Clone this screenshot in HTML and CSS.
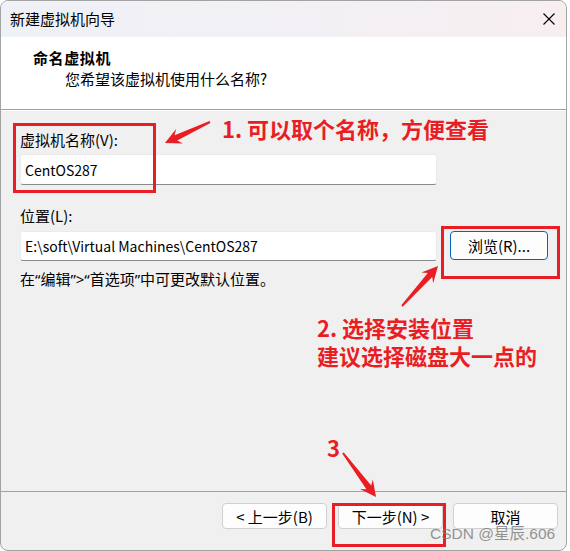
FILE: index.html
```html
<!DOCTYPE html>
<html lang="zh-CN">
<head>
<meta charset="utf-8">
<title>新建虚拟机向导</title>
<link rel="stylesheet" href="styles.css">
</head>
<body>
<div class="window">
  <div class="titlebar">
    <span class="title">新建虚拟机向导</span>
    <svg class="close" width="12" height="12" viewBox="0 0 12 12"><path d="M0.5 0.5 L11.5 11.5 M11.5 0.5 L0.5 11.5" stroke="#000" stroke-width="1.1" fill="none"/></svg>
  </div>
  <div class="header">
    <div class="h-title">命名虚拟机</div>
    <div class="h-sub">您希望该虚拟机使用什么名称?</div>
  </div>
  <div class="content">
    <div class="label">虚拟机名称(V):</div>
    <div class="input name">CentOS287</div>
    <div class="label label2">位置(L):</div>
    <div class="row">
      <div class="input path">E:\soft\Virtual Machines\CentOS287</div>
      <div class="btn browse">浏览(R)...</div>
    </div>
    <div class="hint">在“编辑”&gt;“首选项”中可更改默认位置。</div>
  </div>
  <div class="footer">
    <div class="btn back">&lt; 上一步(B)</div>
    <div class="btn next">下一步(N) &gt;</div>
    <div class="btn cancel">取消</div>
  </div>
</div>

<svg class="annot" width="570" height="551" viewBox="0 0 570 551">
  <g fill="none" stroke="#e91e25" stroke-width="3">
    <rect x="14.5" y="124.5" width="140" height="67"/>
    <rect x="442.5" y="227.5" width="116" height="50"/>
    <rect x="333.5" y="504.5" width="111" height="41"/>
  </g>
  <g fill="#e91e25">
    <polygon points="209.6,121.1 174.6,135.2 176.1,129.0 165,143 182.9,143.5 177.2,140.6 210.4,122.9"/>
    <polygon points="402.7,306.7 432.2,276.9 433.2,283.3 438,266 421.4,272.6 427.8,272.9 401.3,305.3"/>
    <polygon points="342.2,453.6 366.4,489.2 360.0,489.0 376,497 372.8,479.4 371.2,485.6 343.8,452.4"/>
  </g>
</svg>
<div class="note n1">1. 可以取个名称，方便查看</div>
<div class="note n2">2. 选择安装位置<br>建议选择磁盘大一点的</div>
<div class="note n3">3</div>
<div class="watermark">CSDN @星辰.606</div>
</body>
</html>
```
FILE: styles.css
```css
html, body {
  margin: 0;
  padding: 0;
  background: #ffffff;
}
body {
  position: relative;
  width: 570px;
  height: 551px;
  overflow: hidden;
  font-family: "Noto Sans CJK SC", "Noto Sans", sans-serif;
  font-size: 15px;
  color: #000;
}
.window {
  width: 567px;
  height: 551px;
  box-sizing: border-box;
  border: 1px solid #a3a3a3;
  border-radius: 8px;
  overflow: hidden;
  display: flex;
  flex-direction: column;
  background: #f0f0f0;
}
.titlebar {
  height: 36px;
  flex: none;
  display: flex;
  align-items: center;
  padding: 0 11px 0 9px;
  background: linear-gradient(90deg, #eef1f7 0%, #f3f0f4 60%, #f7eef0 100%);
}
.title {
  font-size: 15px;
  line-height: 20px;
}
.close {
  margin-left: auto;
  display: block;
}
.header {
  height: 73px;
  flex: none;
  box-sizing: border-box;
  background: #fff;
  border-bottom: 1px solid #a0a0a0;
  padding: 11px 0 0 32px;
}
.h-title {
  font-weight: bold;
  font-size: 15px;
  line-height: 20px;
  letter-spacing: 0.6px;
}
.h-sub {
  font-size: 15px;
  line-height: 20px;
  margin-top: 1px;
  margin-left: 32px;
}
.content {
  flex: 1;
  border-top: 1px solid #ffffff;
  padding: 19px 0 0 19px;
}
.label {
  line-height: 20px;
}
.label2 {
  margin-top: 21px;
}
.input {
  box-sizing: border-box;
  width: 417px;
  background: #fff;
  border: 1px solid #ebebeb;
  border-bottom: 1px solid #8a8a8a;
  border-radius: 3px;
  padding-left: 4px;
  display: flex;
  align-items: center;
  font-size: 14px;
}
.name {
  height: 31px;
  margin-top: 4px;
}
.row {
  display: flex;
  align-items: flex-start;
  margin-top: 5px;
}
.path {
  height: 30px;
}
.btn {
  box-sizing: border-box;
  background: #fdfdfd;
  border: 1px solid #d0d0d0;
  border-radius: 4px;
  display: flex;
  align-items: center;
  justify-content: center;
}
.browse {
  width: 98px;
  height: 29px;
  margin-left: 13px;
  border-color: #0067c0;
}
.hint {
  margin-top: 8px;
  line-height: 20px;
  font-family: "Noto Sans", "Noto Sans CJK SC", sans-serif;
}
.footer {
  flex: none;
  height: 47px;
  border-top: 1px solid #a0a0a0;
  display: flex;
  justify-content: flex-end;
  align-items: flex-start;
  padding: 11px 8px 0 0;
}
.footer .btn {
  width: 105px;
  height: 26px;
}
.back {
  margin-right: 11px;
}
.next {
  margin-right: 10px;
}
.annot {
  position: absolute;
  left: 0;
  top: 0;
}
.note {
  position: absolute;
  color: #e91e25;
  font-weight: bold;
  font-size: 22px;
  line-height: 28px;
  white-space: nowrap;
}
.n1 {
  left: 222px;
  top: 114px;
}
.n2 {
  left: 317px;
  top: 313px;
}
.n3 {
  left: 327px;
  top: 433px;
}
.watermark {
  position: absolute;
  left: 430px;
  top: 523px;
  font-family: "Liberation Sans", "Noto Sans CJK SC", sans-serif;
  font-size: 15.5px;
  line-height: 22px;
  color: rgba(128, 128, 128, 0.85);
  white-space: nowrap;
}
```
